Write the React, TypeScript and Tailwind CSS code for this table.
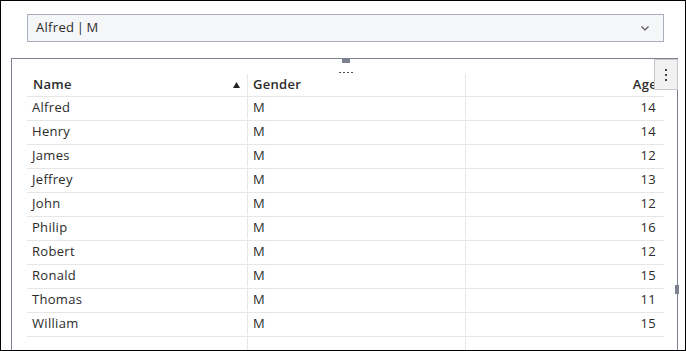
import React from "react";

const rows: [string, string, number][] = [
  ["Alfred", "M", 14],
  ["Henry", "M", 14],
  ["James", "M", 12],
  ["Jeffrey", "M", 13],
  ["John", "M", 12],
  ["Philip", "M", 16],
  ["Robert", "M", 12],
  ["Ronald", "M", 15],
  ["Thomas", "M", 11],
  ["William", "M", 15],
];

export default function App() {
  return (
    <div
      className="w-[686px] h-[351px] border border-black bg-white overflow-hidden flex flex-col text-[#2b2b2b] text-[13px] tracking-[0.3px]"
      style={{ fontFamily: "'Open Sans', Lato, sans-serif" }}
    >
      <div className="mt-[13px] ml-[26px] w-[637px] h-[28px] shrink-0 border border-[#a9afba] bg-[#f5f6f8] flex items-center justify-between pl-[8px] pr-[14px]">
        <span>Alfred&thinsp;|&thinsp;M</span>
        <svg width="8" height="5" viewBox="0 0 8 5" className="mt-[1px]">
          <path d="M0.5 0.5 L4 4 L7.5 0.5" fill="none" stroke="#555" strokeWidth="1.2" />
        </svg>
      </div>
      <div className="relative mt-[16px] ml-[10px] w-[667px] flex-1 border-t border-l border-r border-[#7b8190] pl-[15px] pt-[14px] flex flex-col">
        {/* top resize handle */}
        <div className="absolute top-0 left-[330px] w-[8px] h-[4px] bg-[#7b8190]" />
        <div className="absolute top-[13px] left-[327px] flex gap-[2px]">
          <span className="w-[2px] h-[1px] bg-[#555]" />
          <span className="w-[2px] h-[1px] bg-[#555]" />
          <span className="w-[2px] h-[1px] bg-[#555]" />
          <span className="w-[2px] h-[1px] bg-[#555]" />
        </div>
        {/* right resize handle */}
        <div className="absolute right-[-2px] top-[226px] w-[4px] h-[9px] bg-[#7b8190]" />
        {/* menu button */}
        <div className="absolute top-0 right-[-1px] w-[24px] h-[31px] bg-[#f1f1f2] border border-[#c5c8cd] flex flex-col items-center justify-center gap-[3px] z-10">
          <span className="w-[2px] h-[2px] bg-[#444]" />
          <span className="w-[2px] h-[2px] bg-[#444]" />
          <span className="w-[2px] h-[2px] bg-[#444]" />
        </div>
        <div className="w-[637px] flex-1 flex flex-col">
          <div className="flex h-[24px] border-b border-[#e6e6e6] font-semibold shrink-0">
            <div className="w-[221px] border-r border-[#e6e6e6] mt-[1px] flex items-center justify-between pl-[6px] pr-[7px]">
              <span>Name</span>
              <svg width="7" height="6" viewBox="0 0 7 6">
                <path d="M3.5 0 L7 6 L0 6 Z" fill="#222" />
              </svg>
            </div>
            <div className="w-[218px] border-r border-[#e6e6e6] mt-[1px] flex items-center pl-[5px]">Gender</div>
            <div className="flex-1 flex items-center justify-end pr-[7px]">Age</div>
          </div>
          {rows.map(([n, g, a]) => (
            <div key={n} className="flex h-[24px] border-b border-[#e6e6e6] shrink-0 pb-[1px]">
              <div className="w-[221px] border-r border-[#e6e6e6] flex items-center pl-[5px]">{n}</div>
              <div className="w-[218px] border-r border-[#e6e6e6] flex items-center pl-[5px]">{g}</div>
              <div className="flex-1 flex items-center justify-end pr-[8px]">{a}</div>
            </div>
          ))}
          <div className="flex flex-1">
            <div className="w-[221px] border-r border-[#e6e6e6]" />
            <div className="w-[218px] border-r border-[#e6e6e6]" />
          </div>
        </div>
      </div>
    </div>
  );
}
